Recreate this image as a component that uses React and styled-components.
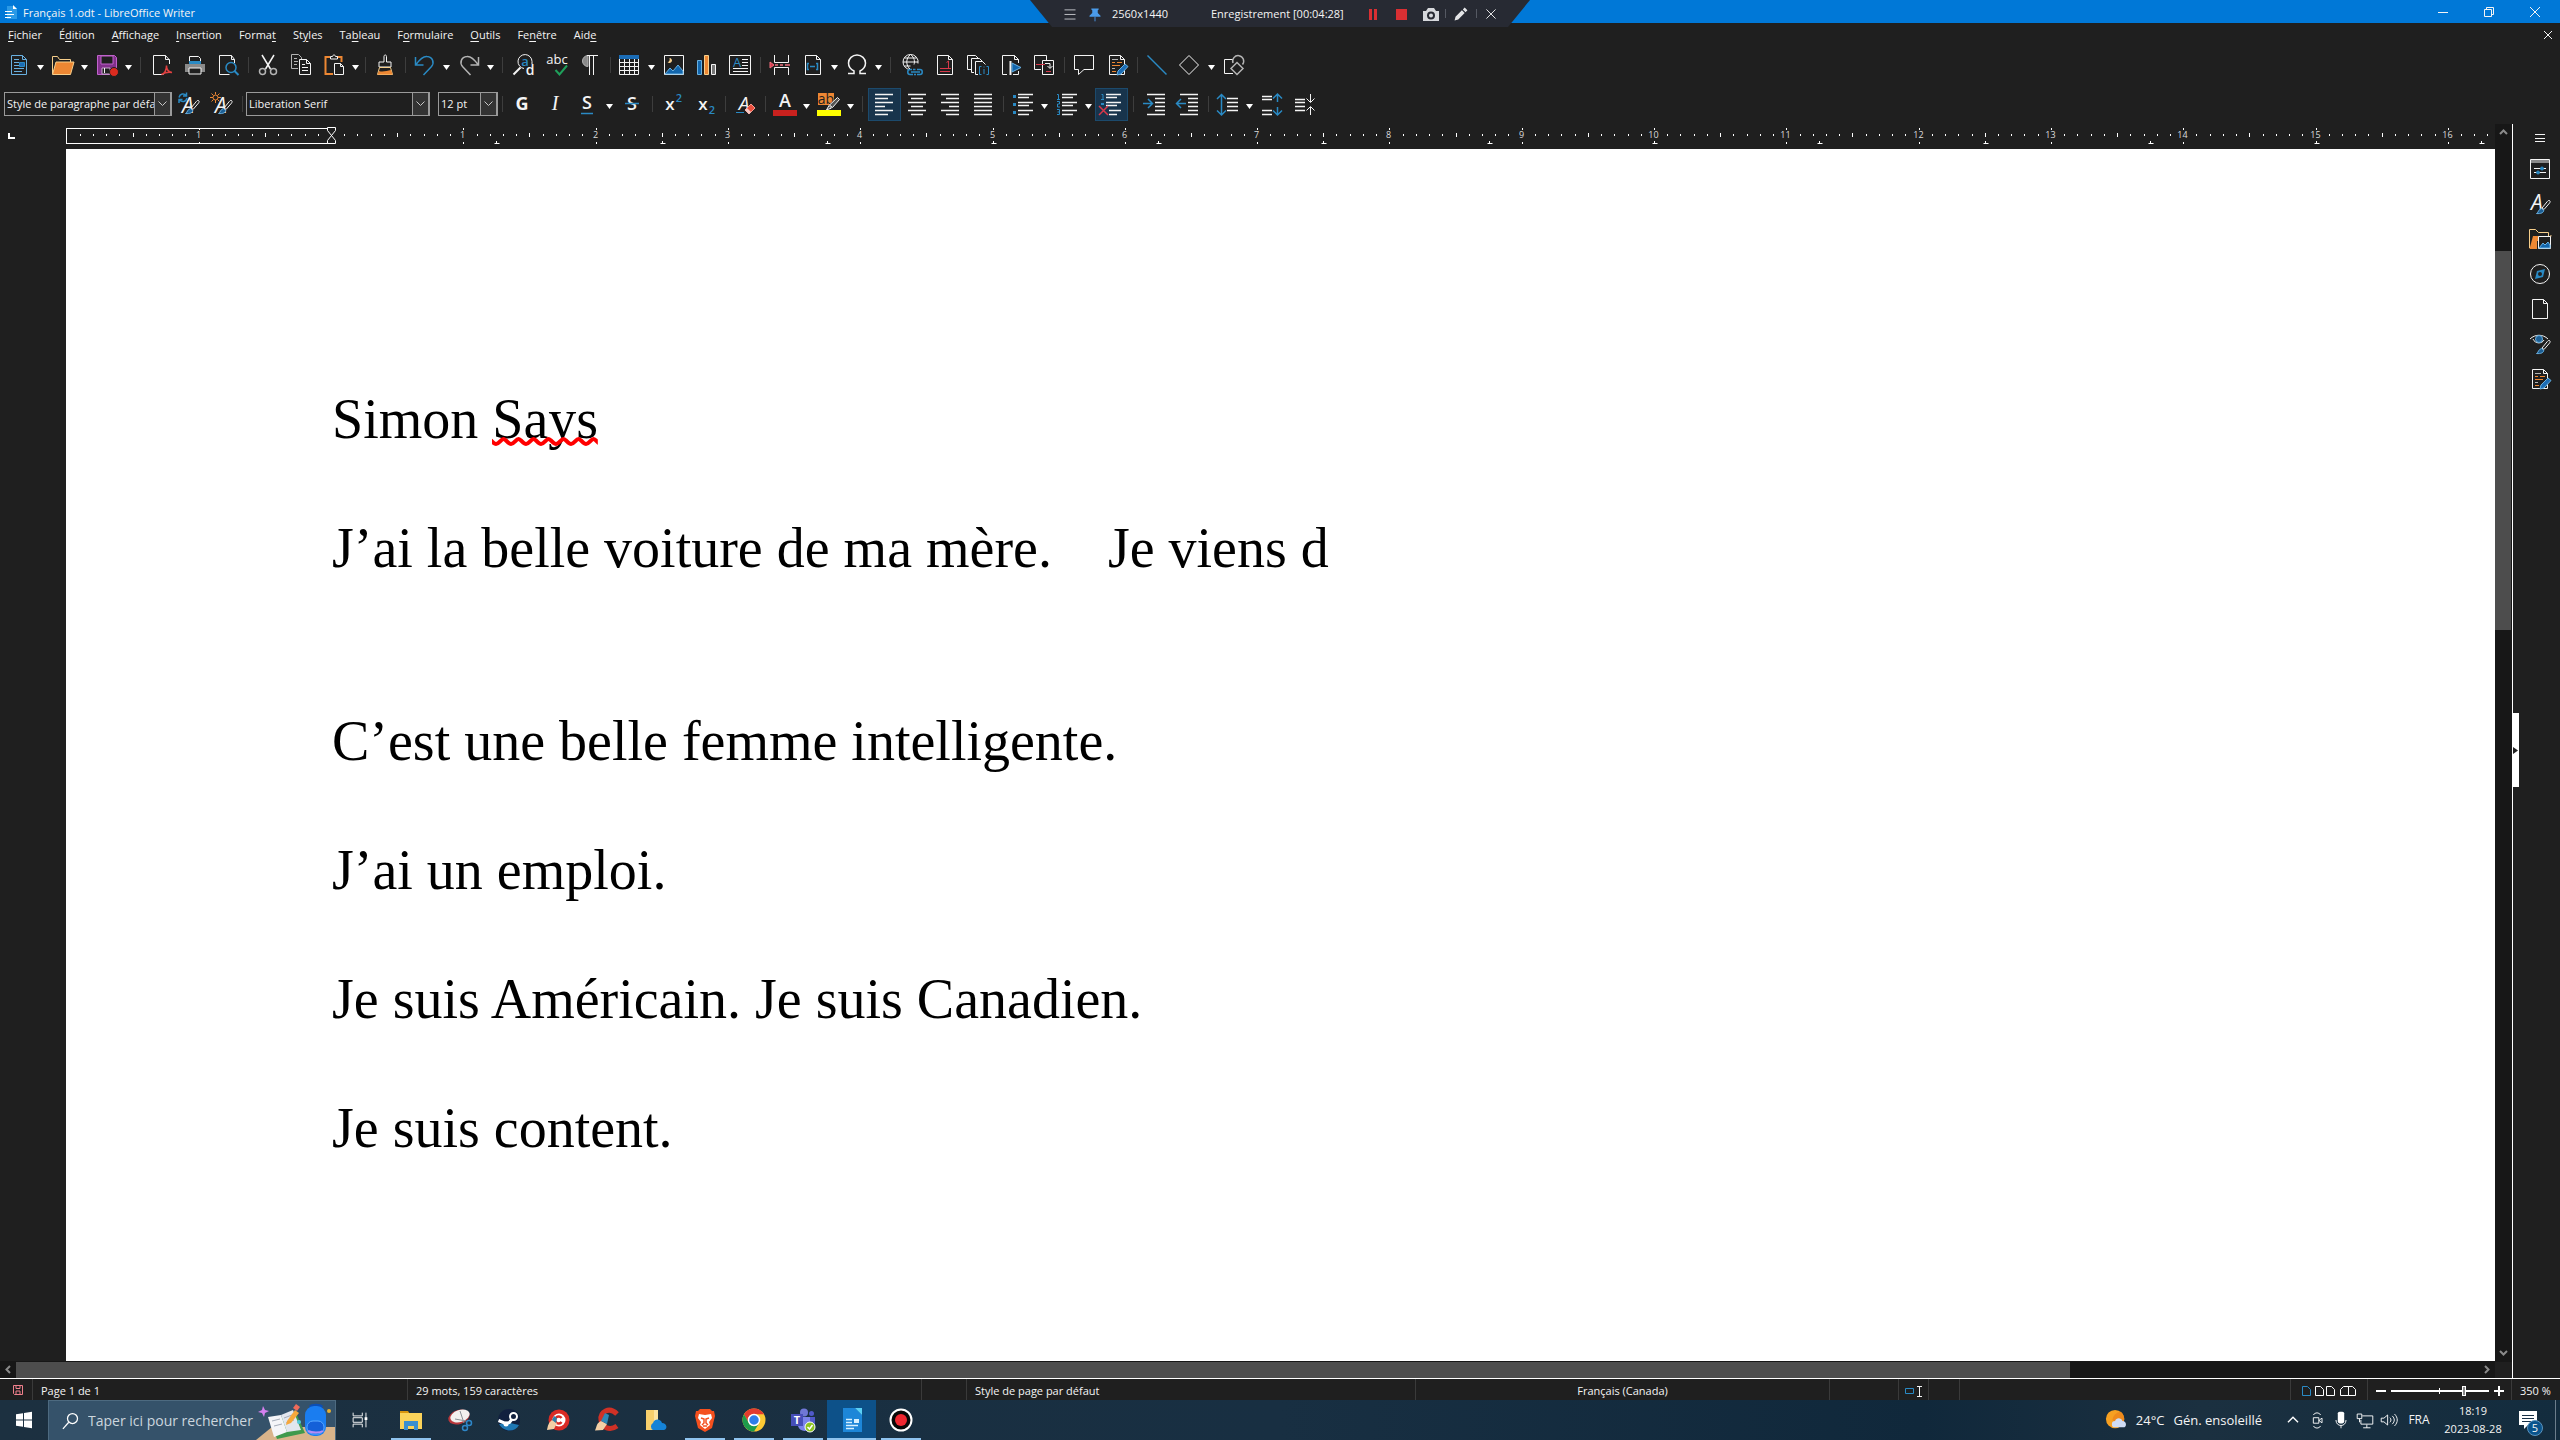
import React from 'react';
import styled, {createGlobalStyle} from 'styled-components';

const WHITE = "#f4f4f4";
const BLUE = "#2a8ac4";
const SKY = "#69b0e0";
const ORANGE = "#ed8733";
const SAND = "#f7cf8b";
const RED = "#d8384a";
const GREY = "#b4b4b4";

const UI_FONT = "'Open Sans', 'Noto Sans', sans-serif";

/* ---------- icon shapes, all on a 24 x 24 grid ---------- */

const Sheet = ({color = WHITE}) => <path d="M4.5 2.5h11l4 4v15h-15zM15.5 2.5v4h4" stroke={color}/>;
const Brush = () => <g>
    <path d="M21.5 8.500c1 .6.600 1.800 0 2.600l-5.500 6.400-2-1.500 5.500-6.700c.7-.8 1.300-1.100 2-.8z" stroke={WHITE}/>
    <path d="M13.500 16.500l2.300 1.700c0 2.500-3 3.800-7.300 3.300 2-1 1.800-4.200 5-5z" stroke={SKY} fill="#1d5f94"/>
</g>;
const Pencil = () => <path d="M12 22l1-4 7-7 3 2.500-7 7.500z" fill="#1b6cb5" stroke={SKY}/>;
const Lines = ({rows, color = WHITE, width = 2}) => <path
    d={rows.map(([x1, x2, y]) => `M${x1} ${y}H${x2}`).join("")} stroke={color} strokeWidth={width}/>;
const Glyph = ({x = 12, y = 18, size = 18, fill = WHITE, ...rest}) =>
    <text x={x} y={y} fontSize={size} fill={fill} stroke="none" textAnchor="middle" fontFamily={UI_FONT} {...rest}/>;
const EditedSheet = () => <g>
    <Sheet/>
    <path d="M7 6.500h6M7 15.500h3" stroke={GREY}/>
    <path d="M7 9.500h3M12 9.500h5M7 12.500h8M7 18.500h4" stroke={ORANGE}/>
    <Pencil/>
</g>;
const BigA = ({x = 8, y = 17, size = 19}) => <Glyph x={x} y={y} size={size} fontStyle="italic">A</Glyph>;

const SHAPES = {
    new: <g>
        <Sheet color={SKY}/>
        <path d="M7 6.500h5M7 9.500h5M7 12.500h5M7 15.500h10M7 18.500h8" stroke={SKY}/>
        <path d="M12.500 9.500h5v4h-5z" stroke={BLUE} fill="#1b6cb5"/>
    </g>,
    open: <g>
        <path d="M1.500 21V3.500h5l2 3h11V9" stroke={SAND}/>
        <path d="M5 9h18l-3.500 12.500H1.500z" fill={ORANGE} stroke={SAND}/>
    </g>,
    save: <g>
        <path d="M2.500 2.500h17l2 2v17h-19z" fill="#82308c" stroke="#c063cc"/>
        <path d="M6 3h12v8H6z" fill="#1f1f1f" stroke="#c063cc"/>
        <path d="M7 15h8v6H7z" fill="#1f1f1f" stroke="#c9a6cd"/>
        <path d="M9.500 15v5" stroke={WHITE}/>
        <circle cx="19" cy="19" r="4.500" fill="#dc2b1f" stroke="#1f1f1f"/>
    </g>,
    pdf: <g>
        <path d="M19.500 11V7l-4-4.500h-12v19h10M15.500 2.500v4h4" stroke={WHITE}/>
        <path d="M11.500 21.500c4-1.500 5-5 5-9 0 4.500 2 6.500 5.500 7-4-1-7 0-10.500 2z" stroke="#e04040" strokeWidth="1.500"/>
    </g>,
    print: <g>
        <path d="M6.500 9V3.500h9l2 2V9" stroke={WHITE}/>
        <path d="M6 8h12v4H6z" fill={BLUE}/>
        <path d="M2 11h20v8H2z" fill="#8a8a8a"/>
        <path d="M6 15h12v6H6z" fill="#1f1f1f" stroke={WHITE}/>
    </g>,
    preview: <g>
        <path d="M18.500 10V6.500l-3-4h-12v19h10M15.500 2.500v4h3" stroke={WHITE}/>
        <circle cx="15" cy="14.500" r="5" stroke={BLUE} strokeWidth="1.500"/>
        <path d="M18.500 18l4 4" stroke={BLUE} strokeWidth="2"/>
    </g>,
    cut: <g>
        <path d="M6 2l8.500 14M18 2L9.500 16" stroke={WHITE} strokeWidth="1.500"/>
        <circle cx="6.500" cy="18.500" r="3" stroke={GREY} strokeWidth="1.500"/>
        <circle cx="17.500" cy="18.500" r="3" stroke={GREY} strokeWidth="1.500"/>
    </g>,
    copy: <g>
        <path d="M9 15.500H2.500v-14h7l3 3V7M5 5.500h3M5 8.500h4M5 11.500h3" stroke={GREY}/>
        <path d="M10.500 6.500h7l4 4v11h-11zM17.500 6.500v4h4M13 11.500h3M13 14.500h6M13 17.500h6" stroke={WHITE}/>
    </g>,
    paste: <g>
        <path d="M8 4H3.500v17H11M15 4h4.500v5" stroke={ORANGE} strokeWidth="2"/>
        <path d="M8.500 6V3.500h2c0-2 3-2 3 0h2V6z" stroke={WHITE}/>
        <path d="M12.500 10.500h6l3 3v8h-9zM18.500 10.500v3h3" stroke={WHITE}/>
    </g>,
    brush: <g>
        <path d="M11 9V3.500c0-2 2.500-2 2.500 0V9h4.500v5H6V9z" stroke={WHITE}/>
        <path d="M6.500 14.500h11l2 7h-15z" stroke={SAND}/>
        <path d="M6 18c4 1.500 8-.5 12-1l1.500 4.500h-15z" fill={ORANGE}/>
    </g>,
    undo: <path d="M2.500 4v8h8M3 11.500C7 6 10 3 14 3.500c6 .5 7.500 6.500 4.500 10l-8 8.500" stroke={BLUE} strokeWidth="1.500"/>,
    redo: <path d="M21.500 4v8h-8M21 11.500C17 6 14 3 10 3.500c-6 .5-7.500 6.500-4.500 10l8 8.500" stroke={GREY} strokeWidth="1.500"/>,
    find: <g>
        <path d="M20 11V8.500a7 7 0 1 0-8 7" stroke={WHITE}/>
        <path d="M8.500 14.500L1.500 21.500" stroke={WHITE} strokeWidth="2"/>
        <Glyph x={13} y={13} size={13} fill={BLUE} fontWeight="600">a</Glyph>
        <Glyph x={18} y={22} size={14} fontWeight="600">d</Glyph>
    </g>,
    spelling: <g>
        <Glyph x={12} y={11} size={13}>abc</Glyph>
        <path d="M10.500 17l4 4.500L22 12.500" stroke="#1fa05b" strokeWidth="2"/>
    </g>,
    pilcrow: <g>
        <path d="M10 2.500a5.500 5.500 0 0 0 0 11z" fill="#8a8a8a" stroke={GREY}/>
        <path d="M9 2.500h11M11.500 2.500V22M15.500 2.500V22" stroke={WHITE}/>
    </g>,
    table: <g transform="translate(-1 0)">
        <path d="M2.500 2.500h19v19h-19zM2.500 9.500h19M2.500 13.500h19M2.500 17.500h19M7.500 6v15M12.500 6v15M17.500 6v15" stroke={WHITE}/>
        <path d="M2 2h20v4H2z" fill="#1b6cb5"/>
    </g>,
    image: <g>
        <path d="M2.500 2.500h19v19h-19z" stroke={WHITE}/>
        <path d="M3 21l5-6 3 3 5-6 5 6v3z" fill="#1266ad" stroke={SKY}/>
        <path d="M7.500 5a2.500 2.500 0 1 1-2 4c2 0 2.500-2 2-4z" fill={SAND}/>
    </g>,
    chart: <g>
        <path d="M2.500 7.500h4v14h-4z" fill="#1266ad" stroke={SKY}/>
        <path d="M9.500 2.500h4v19h-4z" fill={ORANGE} stroke={SAND}/>
        <path d="M16.500 11.500h4v10h-4z" fill="#777" stroke={WHITE}/>
    </g>,
    textbox: <g>
        <path d="M1.500 2.500h21v19h-21zM14 6.500h6M14 9.500h6M14 12.500h6M5 15.500h15M5 18.500h15" stroke={WHITE}/>
        <Glyph x={9} y={14} size={13} fill={BLUE}>A</Glyph>
    </g>,
    pageBreak: <g>
        <path d="M6.500 2v7.500h14V2M6.500 22v-7.500h14V22" stroke={WHITE}/>
        <path d="M7 12h3M12 12h3M17 12h5" stroke="#ef6f7d" strokeWidth="1.500"/>
        <path d="M2 9l4 3-4 3z" fill={RED} stroke="#ef6f7d"/>
    </g>,
    field: <g>
        <Sheet/>
        <path d="M8 10.500H6.500v6H8M15 10.500h1.500v6H15M9 13.500h5" stroke={BLUE} strokeWidth="1.500"/>
    </g>,
    omega: <path d="M3 20.500h6v-2.500C5 16 3.500 13 3.500 10a8.500 8 0 0 1 17 0c0 3-1.500 6-5.500 8v2.500h6" stroke={WHITE} strokeWidth="1.500"/>,
    link: <g>
        <path d="M10.500 1.500a7.500 7.500 0 1 0 0 15M10.500 1.500a7.500 7.500 0 0 1 7.500 9M3 9h15M4.500 5h12M4.500 13h6M10.500 1.500c-5 4-5 11 0 15M10.500 1.500c4 3 4.500 7 3.500 10" stroke={WHITE}/>
        <path d="M12 16.500h-2c-3 0-3 5 0 5h3M17 16.500h3c3 0 3 5 0 5h-3M11 19h9M13 16.500h2.500M14 21.500h2" stroke={BLUE} strokeWidth="1.500"/>
    </g>,
    footnote: <g>
        <Sheet/>
        <path d="M7 18.500h10M7 15.500h6" stroke={RED}/>
        <path d="M13.500 9.500l2-1.500v8M13 15.500h5" stroke={RED}/>
    </g>,
    endnote: <g>
        <path d="M5 16.500H1.500v-14h8l3 3M8 19.500H5.500v-14h8l3 3M12 21.500H9.500v-13h7l3 3" stroke={WHITE}/>
        <path d="M15.500 13.500h-2v8h2M20.500 13.500h2v8h-2M18 16v5M18 13.500v1" stroke={BLUE}/>
    </g>,
    bookmark: <g>
        <path d="M8 21.500H3.500v-19h12l4 4V10M15.500 2.500v4h4M19.500 18v3.500H14" stroke={WHITE}/>
        <path d="M11.500 8v14" stroke={WHITE} strokeWidth="2"/>
        <path d="M13 10l9 4.500-9 4.500z" fill="#1266ad" stroke={SKY}/>
    </g>,
    crossRef: <g>
        <path d="M9 16.500H2.500v-14h12V7M10.500 7.500h11v14h-11zM13 10.500h5V15M15.500 13l2.500 2.500L20.500 13" stroke={WHITE}/>
        <path d="M4 11.500h9M14 18.500h5" stroke={RED}/>
    </g>,
    comment: <path d="M2.500 2.500h19v14H12l-5.500 5v-5h-4z" stroke={WHITE}/>,
    track: <EditedSheet/>,
    line: <path d="M2.500 2.500l19 19" stroke={BLUE} strokeWidth="1.500"/>,
    diamond: <path d="M11 2.500l9.500 9.500-9.500 9.500L1.500 12z" stroke={WHITE}/>,
    shapes: <g>
        <path d="M11 6.500H2.500v14H11" stroke={WHITE}/>
        <path d="M11 10a5.500 5.500 0 1 1 9.500 1.500" stroke={GREY} strokeWidth="1.500"/>
        <path d="M15 9.500l6 6-6 6-6-6z" stroke={GREY} strokeWidth="1.500"/>
    </g>,

    updateStyle: <g>
        <BigA x={11} y={21} size={21}/>
        <Brush/>
        <path d="M2 5.500C3 1.500 7 1 9 3.500M9.500 .500v3.500H6M10 6c-1 4-5 4.500-7.500 2M2 11V7.500h3.500" stroke={BLUE} strokeWidth="1.500"/>
    </g>,
    newStyle: <g>
        <BigA x={11} y={21} size={21}/>
        <Brush/>
        <path d="M5.500 0v2.500M5.500 8v3M0 5.500h3M8 5.500h3M1.500 1.500l2 2M7.500 7.500l2 2M9.500 1.500l-2 2M3.500 7.500l-2 2" stroke={ORANGE}/>
        <circle cx="5.500" cy="5.500" r="2.500" stroke={ORANGE}/>
    </g>,
    bold: <Glyph fontWeight="700">G</Glyph>,
    italic: <Glyph size={20} fontFamily="'Liberation Serif', serif" fontStyle="italic">I</Glyph>,
    underline: <g>
        <Glyph x={11} y={17} fontWeight="600">S</Glyph>
        <path d="M5 21.500h12" stroke={BLUE} strokeWidth="1.500"/>
    </g>,
    strike: <g>
        <Glyph fontWeight="600">S</Glyph>
        <path d="M5 11.500h14" stroke={BLUE} strokeWidth="1.500"/>
    </g>,
    superscript: <g>
        <Glyph x={10} size={17} fontWeight="600">x</Glyph>
        <Glyph x={19} y={10} size={11} fill={BLUE} fontWeight="600">2</Glyph>
    </g>,
    subscript: <g>
        <Glyph x={10} size={17} fontWeight="600">x</Glyph>
        <Glyph x={19} y={22} size={11} fill={BLUE} fontWeight="600">2</Glyph>
    </g>,
    clear: <g>
        <BigA x={11} y={18}/>
        <path d="M3 20.500h8" stroke={BLUE}/>
        <path d="M12 18l6-6 4 4-6 6z" fill="#e8503f" stroke="#f59b90"/>
        <path d="M12 18l2-2 4 4-2 2z" fill="#f7c9c4"/>
    </g>,
    fontColor: <g>
        <Glyph y={15} size={18} fontWeight="600">A</Glyph>
        <path d="M0 18h24v6H0z" fill="#c9211e"/>
    </g>,
    highlight: <g>
        <path d="M1 1h16v12H1z" fill={ORANGE}/>
        <Glyph x={9} y={12} size={14} fill="#1f1f1f">ab</Glyph>
        <path d="M20.500 5.500l2 2-7 8-3-2.500zM12 13.500l2.500 2.500-5 2z" stroke={WHITE} fill="#555"/>
        <path d="M0 18h24v6H0z" fill="#ffff00"/>
    </g>,
    left: <Lines width={1.500} rows={[[3, 21, 2.500], [3, 16, 6.500], [3, 21, 10.500], [3, 13, 14.500], [3, 21, 18.500], [3, 16, 22.500]]}/>,
    center: <Lines width={1.500} rows={[[3, 21, 2.500], [6, 18, 6.500], [3, 21, 10.500], [6, 18, 14.500], [3, 21, 18.500], [6, 18, 22.500]]}/>,
    right: <Lines width={1.500} rows={[[3, 21, 2.500], [8, 21, 6.500], [3, 21, 10.500], [11, 21, 14.500], [3, 21, 18.500], [8, 21, 22.500]]}/>,
    justify: <Lines width={1.500} rows={[[3, 21, 2.500], [3, 21, 6.500], [3, 21, 10.500], [3, 21, 14.500], [3, 21, 18.500], [3, 21, 22.500]]}/>,
    bullets: <g>
        <Lines width={1.500} rows={[[7, 22, 2.500], [7, 18, 5.500], [7, 22, 10.500], [7, 18, 13.500], [7, 22, 18.500], [7, 18, 22.500]]}/>
        <path d="M2 3h3v3H2zM2 11h3v3H2zM2 19h3v3H2z" fill={BLUE}/>
    </g>,
    numbering: <g>
        <Lines width={1.500} rows={[[7, 22, 2.500], [7, 18, 5.500], [7, 22, 10.500], [7, 18, 13.500], [7, 22, 18.500], [7, 18, 22.500]]}/>
        <path d="M2 2.500h1.500v5M2 7.500h3M2 9.500h2.500v2.500H2.500v3H5M2 17.500h2.500v5H2M2.500 20h2" stroke={BLUE}/>
    </g>,
    noList: <g>
        <Lines width={1.500} rows={[[7, 22, 2.500], [7, 18, 5.500], [7, 22, 10.500], [7, 18, 13.500], [10, 22, 18.500], [10, 18, 22.500]]}/>
        <path d="M2.500 2.500h1.500v5M2 7.500h3" stroke={BLUE}/>
        <path d="M2 11h3v2H2z" fill={BLUE}/>
        <path d="M0 14l9 9M9 14l-9 9" stroke={RED} strokeWidth="1.500"/>
    </g>,
    indent: <g>
        <Lines width={1.500} rows={[[4, 22, 2.500], [12, 22, 6.500], [12, 22, 10.500], [12, 22, 14.500], [12, 22, 18.500], [4, 22, 22.500]]}/>
        <path d="M0 11.500h9M5 7l4.500 4.500L5 16" stroke={BLUE} strokeWidth="1.500"/>
    </g>,
    outdent: <g>
        <Lines width={1.500} rows={[[4, 22, 2.500], [12, 22, 6.500], [12, 22, 10.500], [12, 22, 14.500], [12, 22, 18.500], [4, 22, 22.500]]}/>
        <path d="M1 11.500h9M5 7L.500 11.500 5 16" stroke={BLUE} strokeWidth="1.500"/>
    </g>,
    spacing: <g>
        <Lines width={1.500} rows={[[11, 22, 6.500], [11, 22, 10.500], [11, 22, 14.500], [11, 22, 18.500]]}/>
        <path d="M5.500 3v20M1 7l4.500-4.500L10 7M1 18.500l4.500 4.500 4.500-4.500" stroke={BLUE} strokeWidth="1.500"/>
    </g>,
    moreSpace: <g>
        <Lines width={1.500} rows={[[2, 12, 4.500], [2, 12, 7.500], [2, 12, 18.500], [2, 12, 22.500]]}/>
        <path d="M17.500 2v8M13 6.500l4.500-4.500L22 6.500M17.500 15v8M13 18.500l4.500 4.500 4.500-4.500" stroke={BLUE} strokeWidth="1.500"/>
    </g>,
    lessSpace: <g>
        <Lines width={1.500} rows={[[2, 12, 7.500], [2, 12, 10.500], [2, 12, 14.500], [2, 12, 18.500]]}/>
        <path d="M17.500 2v8M13.500 6.500l4 4 4-4M17.500 15v8M13.500 18.500l4-4 4 4" stroke={WHITE}/>
    </g>,

    burger: <Lines width={1} rows={[[7, 17, 8.500], [7, 17, 12.500], [7, 17, 15.500]]}/>,
    properties: <g>
        <path d="M2.500 2.500h19v19h-19z" stroke={WHITE}/>
        <path d="M3 3h18v3H3z" fill="#8a8a8a"/>
        <path d="M6 11.500h12M6 15.500h12" stroke={WHITE}/>
        <circle cx="14" cy="11.500" r="1.500" fill={BLUE} stroke={BLUE}/>
        <circle cx="10" cy="15.500" r="1.500" fill={BLUE} stroke={BLUE}/>
    </g>,
    styles: <g><BigA x={9} y={18} size={21}/><Brush/></g>,
    gallery: <g>
        <path d="M1.500 21V2.500h6l3 3h10V9M23 8l-1 5" stroke={SAND}/>
        <path d="M5 9h18v5H9v8H1.500z" fill={ORANGE}/>
        <path d="M10.500 9.500h12v12h-12z" fill="#1f1f1f" stroke={WHITE}/>
        <path d="M11 21l4-5 2 2 3-3 2 3v3z" fill="#1266ad" stroke={SKY}/>
    </g>,
    navigator: <g>
        <circle cx="12" cy="12" r="9.500" stroke={WHITE}/>
        <path d="M17 7l-2 8-8 2 2-8z" fill={BLUE}/>
        <circle cx="12" cy="12" r="2" fill="#1f1f1f"/>
    </g>,
    page: <Sheet/>,
    inspector: <g>
        <path d="M2 7C7 2 15 2 20 7M5 7c2 5 9 5 11 1" stroke={WHITE}/>
        <circle cx="11" cy="7" r="3.500" fill="#1d5f94" stroke={SKY}/>
        <Brush/>
    </g>,
    changes: <EditedSheet/>,

    minimize: <path d="M7 12.500h10" stroke={WHITE}/>,
    restore: <path d="M7.500 9.500h7v7h-7zM9.500 9V7.500h7v7H15" stroke={WHITE}/>,
    close: <path d="M7 7l10 10M17 7L7 17" stroke={WHITE}/>,
    closeSmall: <path d="M8 8l8 8M16 8l-8 8" stroke={WHITE}/>,
    recMenu: <path d="M6 7.500h12M6 12.500h12M6 17.500h12" stroke="#c8cbd0"/>,
    pin: <g>
        <path d="M8 6h8v1l-1 1v3l3 3v1H6v-1l3-3V8L8 7z" fill="#4a9bea"/>
        <path d="M12 15v5" stroke="#4a9bea"/>
    </g>,
    pause: <path d="M8 7h3v11H8zM13 7h3v11h-3z" fill="#d92f33"/>,
    stop: <path d="M6 7h11v11H6z" fill="#d92f33"/>,
    camera: <g>
        <path d="M4 9h3l2-3h6l2 3h3v10H4z" fill="#d6d8dc"/>
        <circle cx="12" cy="13.500" r="3" fill="#d6d8dc" stroke="#272a33" strokeWidth="2"/>
    </g>,
    draw: <path d="M5 19l1-4 7-7 3 3-7 7zM14 7l2-2 3 3-2 2z" fill="#e3e4e6"/>,

    modified: <path d="M7.500 6.500h9v9h-8l-1-1zM10 6.500v3h4v-3M10 15v-3h4v3" stroke="#f0808c"/>,
    insertMode: <g>
        <path d="M3.500 9.500h8v5h-8z" stroke={BLUE}/>
        <path d="M15 7.500h5M15 17.500h5M17.500 8v9" stroke={WHITE}/>
    </g>,

    windows: <path d="M4 6.200l7-1v6.300H4zM12 5l8-1.200v7.700h-8zM4 12.500h7v6.300l-7-1zM12 12.500h8v7.700L12 19z" fill="#fff"/>,
    search: <g>
        <circle cx="15" cy="9" r="6" stroke="#fff" strokeWidth="1.500"/>
        <path d="M10.500 13.500l-7 8" stroke="#fff" strokeWidth="1.500"/>
    </g>,
    taskView: <g>
        <path d="M4.500 4v3.500h10V4M4.500 20v-3.500h10V20M4.500 9.500h10v5h-10zM18.500 4v16" stroke="#fff"/>
        <path d="M17 9h3v3h-3z" fill="#fff"/>
    </g>,
    explorer: <g>
        <path d="M1 3h8l2 3H1z" fill="#d9960e"/>
        <path d="M1 5h22v16H1z" fill="#fbd35a"/>
        <path d="M5 13h14v9h-4v-4H9v4H5z" fill="#3a8fd0"/>
    </g>,
    snip: <g>
        <ellipse cx="11" cy="9" rx="11" ry="7" fill="#b8373b" transform="rotate(-18 11 9)"/>
        <ellipse cx="12" cy="8" rx="10" ry="6" fill="#f2f0ee" transform="rotate(-18 12 8)"/>
        <path d="M12 3l4 12M7 11l11 2" stroke="#8b9196"/>
        <circle cx="17" cy="20" r="2.500" stroke="#2e86c8" strokeWidth="1.500"/>
        <circle cx="21" cy="15" r="2.500" stroke="#2e86c8" strokeWidth="1.500"/>
    </g>,
    steam: <g>
        <circle cx="12" cy="12" r="11" fill="#11203f"/>
        <path d="M2 16c4 8 16 9 20 1l-9-2z" fill="#1f78b4"/>
        <path d="M1.500 12.500l7 3 4-1 3-4" stroke="#fff" strokeWidth="3"/>
        <circle cx="16.500" cy="8.500" r="3.500" fill="#11203f" stroke="#fff" strokeWidth="2"/>
        <circle cx="9" cy="16" r="2.500" fill="#fff"/>
    </g>,
    cleanerDisc: <g>
        <circle cx="13" cy="12" r="10.500" fill="#d92b25"/>
        <circle cx="13" cy="12" r="6.500" fill="#fff"/>
        <path d="M15.500 10a3.500 3.500 0 1 0 0 4" stroke="#d92b25" strokeWidth="2.500"/>
        <path d="M6 12l5 3-3 6-7 1c1-4 1-7 5-10z" fill="#f3cfa5"/>
        <path d="M8 8l3 2-1 5-4-3z" fill="#2f7fa8"/>
    </g>,
    cleaner: <g>
        <path d="M22 6C14-2 5 4 6 12s9 11 16 6" stroke="#cf3126" strokeWidth="5"/>
        <path d="M6 13l6 3-4 6-8 .5c2-4 1-7 6-9.500z" fill="#f3cfa5"/>
        <path d="M10 5l4 2-2 9-6-3z" fill="#2f86b5"/>
    </g>,
    cloudFolder: <g>
        <path d="M2 2h9v20H2z" fill="#f6cf6c"/>
        <path d="M10 2h4v20h-4z" fill="#fbe3a0"/>
        <path d="M9 22a4 4 0 0 1 0-7c2-5 8-4 9 0 5 0 6 6 2 7z" fill="#1583d8"/>
    </g>,
    brave: <g>
        <path d="M7 1h10l2 2h2l1 5-3 12-7 4-7-4L2 8l1-5h2z" fill="#f4501e"/>
        <path d="M6 6l6 1 6-1 1 4-3 4 1 3-5 4-5-4 1-3-3-4z" fill="#fff"/>
        <path d="M8 10l3 1v4l-2 2M16 10l-3 1v4l2 2M10 18h4" stroke="#f4501e" strokeWidth="1.500"/>
    </g>,
    chrome: <g>
        <circle cx="12" cy="12" r="11.500" fill="#fcc934"/>
        <path d="M2 6.300A11.500 11.500 0 0 1 22 6.300H12a6 6 0 0 0-5.200 9z" fill="#e33b2e"/>
        <path d="M2 6.300A11.500 11.500 0 0 0 12 23.500l5.200-8.500a6 6 0 0 1-10.400 0z" fill="#1e9b4b"/>
        <circle cx="12" cy="12" r="5.500" fill="#2f7de9" stroke="#fff" strokeWidth="1.500"/>
    </g>,
    teams: <g>
        <circle cx="13" cy="4.500" r="4" fill="#6f77d6"/>
        <circle cx="20.500" cy="5.500" r="2.500" fill="#5059c9"/>
        <path d="M16 9h8v7c0 3-3 5-6 4z" fill="#5059c9"/>
        <path d="M7 9h12v9c0 6-10 7-12 0z" fill="#7b83eb"/>
        <path d="M0 6h12v12H0z" fill="#464eb8"/>
        <Glyph x={6} y={16} size={11} fill="#fff" fontWeight="700">T</Glyph>
        <circle cx="19" cy="19" r="5" fill="#8cc31f" stroke="#fff"/>
        <path d="M16.500 19l2 2 3-4" stroke="#fff" strokeWidth="1.500"/>
    </g>,
    writer: <g>
        <path d="M3 0h12l7 7v17H3z" fill="#1d86d8"/>
        <path d="M15 0h7v7z" fill="#5bd0f5"/>
        <path d="M6 11.500h6M6 14.500h6M6 17.500h12M6 20.500h8" stroke="#d7f0ff" strokeWidth="1.500"/>
        <path d="M14 11h5v4h-5z" fill="#d7f0ff"/>
    </g>,
    record: <g>
        <circle cx="12" cy="12" r="10.500" fill="#080808" stroke="#fff" strokeWidth="2"/>
        <circle cx="12" cy="12" r="6" fill="#ee2630"/>
    </g>,
    sun: <g>
        <circle cx="11" cy="11" r="10" fill="#f6a021"/>
        <path d="M8 12A10 10 0 0 1 17 3a10 10 0 0 1 0 16z" fill="#ee8a1c"/>
        <path d="M11 20a3.500 3.500 0 0 1 0-7c1-4 7-4 8 0 5 0 5 7 1 7z" fill="#cfdcf5"/>
    </g>,
    chevronUp: <path d="M6.500 14.500L12 9l5.500 5.500" stroke="#fff" strokeWidth="1.500"/>,
    meet: <g>
        <path d="M8 9.500h6v6H8zM14.500 12l3-2v5l-3-2z" stroke="#fff" fill="none"/>
        <path d="M8 6.500c2-3 6-3 8 0M8 18.500c2 3 6 3 8 0" stroke="#fff"/>
    </g>,
    mic: <g>
        <path d="M8.500 4.500c0-2 7-2 7 0v9c0 3-7 3-7 0z" fill="#fff"/>
        <path d="M6.500 12c0 8 11 8 11 0M12 18v3" stroke="#fff"/>
    </g>,
    network: <g>
        <path d="M9 7.500h11.500v9h-13V12M14 17v3.500M10 20.500h8" stroke="#fff"/>
        <path d="M3.500 5.500h5v5h-5zM6 10.500v4" stroke="#fff"/>
    </g>,
    speaker: <path d="M3.500 10v4h3l4 3.500v-11L6.500 10zM13 9.500c1.500 1.500 1.500 3.500 0 5M15.500 7.500c3 3 3 6 0 9M18 5.500c4 4 4 9 0 13" stroke="#fff"/>,
    notes: <g>
        <path d="M3 3h18v14H12l-4 4v-4H3z" fill="#fff"/>
        <path d="M6 7.500h12M6 10.500h12M6 13.500h9" stroke="#173046"/>
    </g>,
};

const Icon = ({name, size = 24}) => <svg width={size} height={size} viewBox="0 0 24 24" fill="none" aria-hidden="true">
    {SHAPES[name]}
</svg>;

/* ---------- data ---------- */

// [before, access key, after]
const menus = [
    ["", "F", "ichier"], ["É", "d", "ition"], ["", "A", "ffichage"], ["", "I", "nsertion"], ["Forma", "t", ""],
    ["St", "y", "les"], ["Ta", "b", "leau"], ["F", "o", "rmulaire"], ["", "O", "utils"], ["Fe", "n", "être"], ["Aid", "e", ""],
];

// "+" adds a drop-down arrow, "*" is a pressed button, "|" and "||" are separators
const standardBar = "new+ open+ save+ || pdf print preview | cut copy paste+ | brush | undo+ redo+ || find spelling pilcrow | table+ image chart textbox | pageBreak field+ omega+ || link footnote endnote bookmark crossRef | comment track | line diamond+ shapes".split(" ");
const characterBar = "bold italic underline+ strike | superscript subscript | clear | fontColor+ highlight+ || left* center right justify | bullets+ numbering+ noList* || indent outdent | spacing+ moreSpace lessSpace".split(" ");

const panels = ["properties", "styles", "gallery", "navigator", "page", "inspector", "changes"];

const apps = [
    {name: "explorer", open: true}, {name: "snip"}, {name: "steam"}, {name: "cleanerDisc"}, {name: "cleaner"},
    {name: "cloudFolder"}, {name: "brave", open: true}, {name: "chrome", open: true}, {name: "teams", open: true},
    {name: "writer", open: true, active: true}, {name: "record", open: true},
];

const paragraphs = [
    {text: "J’ai la belle voiture de ma mère.    Je viens d", after: 129},
    {text: "C’est une belle femme intelligente."},
    {text: "J’ai un emploi."},
    {text: "Je suis Américain. Je suis Canadien."},
    {text: "Je suis content."},
];

/* ---------- parts ---------- */

const Tools = ({items}) => items.map((item, i) => {
    if (item[0] === "|") {
        return <Separator key={i} $wide={item === "||"}/>;
    }
    const name = item.replace(/[+*]/, "");
    return <React.Fragment key={i}>
        <ToolButton $pressed={item.endsWith("*")} aria-label={name}><Icon name={name}/></ToolButton>
        {item.endsWith("+") ? <Caret aria-label={name + " options"}>
            <svg width="7" height="5"><path d="M0 0h7l-3.500 5z" fill="#fff"/></svg>
        </Caret> : null}
    </React.Fragment>;
});

const Combo = ({label, value, width}) => <ComboBox $width={width}>
    <ComboSelect aria-label={label} defaultValue={value}>
        <option>{value}</option>
    </ComboSelect>
    <ComboArrow>
        <svg width="9" height="6" fill="none"><path d="M.500 .500l4 4 4-4" stroke="#c8c8c8"/></svg>
    </ComboArrow>
</ComboBox>;

const INCH = 132.3;
const ORIGIN = 265;

const Ruler = () => {
    const ticks = [];
    for (let i = -19; i <= 163; i++) {
        const x = Math.round(ORIGIN + i * INCH / 10);
        if (i === 0) continue;
        if (i % 10 === 0) {
            ticks.push(<g key={i}>
                <path d={`M${x} 4v2M${x} 18v2`}/>
                <text x={x - 1} y="14">{Math.abs(i / 10)}</text>
            </g>);
        } else {
            ticks.push(<path key={i} d={i % 5 === 0 ? `M${x} 9v4` : `M${x} 10v2`}/>);
        }
    }
    const stops = [];
    for (let i = 1; i <= 13; i++) {
        const x = Math.round(ORIGIN + i * INCH * 1.25);
        stops.push(<path key={i} d={`M${x} 17v2M${x - 2} 19.500h5`}/>);
    }
    return <RulerScale>
        <g transform="translate(.5 0)" stroke="#fff" fill="none">
            {ticks}
            {stops}
            <path d="M0 4.500h265M0 19.500h265M0 4v16"/>
            <path d="M261 3.500h8v3l-8 10v3h8v-3l-8-10z" fill="#1f1f1f"/>
        </g>
    </RulerScale>;
};

const Arrow = ({d}) => <svg width="16" height="16" fill="none" aria-hidden="true"><path d={d} stroke="#8a8a8a" strokeWidth="2"/></svg>;

const BooksAndBag = () => <svg width="79" height="38" viewBox="0 0 79 38" aria-hidden="true">
    <path d="M0 38l16-13h63v13z" fill="#d9b48a"/>
    <path d="M14 18l26-7 9 20-28 6z" fill="#3f9a4c"/>
    <path d="M12 15l13-2 6 17-13 5z" fill="#f4f5f8"/>
    <path d="M25 13l12-5 8 20-14 2z" fill="#e2e6ee"/>
    <path d="M16 19l8-2M18 24l8-2M28 16l8-3M30 21l8-3" stroke="#a5acb8"/>
    <path d="M31 19l8-11 4 3-8 10-5 2z" fill="#f6a83c"/>
    <path d="M37 6l3-4 4 3-3 4z" fill="#ee6a5a"/>
    <path d="M7 4l2 4 4 1-4 2-1 4-2-4-4-1 4-2z" fill="#d580f0"/>
    <circle cx="43" cy="20" r="2" fill="#4fc7d8"/>
    <circle cx="73" cy="9" r="2" fill="#e8b030"/>
    <path d="M53 4c2-3 12-3 14 0l-2 4H55z" fill="#0c4fb5"/>
    <rect x="49" y="4" width="21" height="30" rx="9" fill="#1a7df0"/>
    <rect x="51" y="19" width="17" height="13" rx="6" fill="#1460d8" stroke="#59a8ff"/>
    <path d="M52 29c4 2 12 2 15 0" stroke="#b58cf5" strokeWidth="2" fill="none"/>
</svg>;

const App = () => <Desktop>
    <GlobalStyle/>
    <TitleBar>
        <WindowTitle>
            <svg width="14" height="16" viewBox="0 0 14 16" aria-hidden="true">
                <path d="M3 1h7l3 3v10H3z" fill="#2b9ae6"/>
                <path d="M9 0l4 4H9z" fill="#fff"/>
                <path d="M1 6.500h7M1 9.500h9M1 12.500h6" stroke="#fff"/>
            </svg>
            <span>Français 1.odt - LibreOffice Writer</span>
        </WindowTitle>
        <Recorder>
            <RecButton aria-label="Menu"><Icon name="recMenu" size={22}/></RecButton>
            <RecButton aria-label="Épingler"><Icon name="pin" size={22}/></RecButton>
            <RecText>2560x1440</RecText>
            <RecText>Enregistrement [00:04:28]</RecText>
            <RecButton aria-label="Pause"><Icon name="pause"/></RecButton>
            <RecButton aria-label="Arrêter"><Icon name="stop"/></RecButton>
            <RecButton aria-label="Capture"><Icon name="camera"/></RecButton>
            <RecLine/>
            <RecButton aria-label="Dessiner"><Icon name="draw" size={22}/></RecButton>
            <RecLine/>
            <RecButton aria-label="Fermer"><Icon name="close" size={22}/></RecButton>
        </Recorder>
        <WindowButtons>
            <WindowButton aria-label="Réduire"><Icon name="minimize"/></WindowButton>
            <WindowButton aria-label="Restaurer"><Icon name="restore"/></WindowButton>
            <WindowButton aria-label="Fermer"><Icon name="close"/></WindowButton>
        </WindowButtons>
    </TitleBar>

    <MenuBar>
        {menus.map(([a, key, b]) => <MenuItem key={a + key + b}>{a}<u>{key}</u>{b}</MenuItem>)}
        <CloseDocument aria-label="Fermer le document"><Icon name="closeSmall"/></CloseDocument>
    </MenuBar>

    <Toolbar><Tools items={standardBar}/></Toolbar>
    <Toolbar $format>
        <Combo label="Style de paragraphe" value="Style de paragraphe par défaut" width={168}/>
        <Tools items={["updateStyle", "newStyle", "|"]}/>
        <Combo label="Police" value="Liberation Serif" width={184}/>
        <Gap/>
        <Combo label="Taille" value="12 pt" width={60}/>
        <Tools items={["|", ...characterBar]}/>
    </Toolbar>

    <Body>
        <Editor>
            <EditorRow>
                <Column>
                    <RulerRow>
                        <RulerCorner>
                            <svg width="8" height="8" fill="none"><path d="M1 1v5h6" stroke="#fff" strokeWidth="2"/></svg>
                        </RulerCorner>
                        <Ruler/>
                    </RulerRow>
                    <Canvas>
                        <Page>
                            <Paragraph>Simon <Misspelled>Says
                                <Squiggle aria-hidden="true">
                                    <pattern id="wave" width="15" height="9" patternUnits="userSpaceOnUse">
                                        <path d="M-4 2C-1 2 1 7 4 7S9 2 11.500 2 16 7 19 7" stroke="#f00" strokeWidth="4" fill="none"/>
                                    </pattern>
                                    <rect width="100%" height="9" fill="url(#wave)"/>
                                </Squiggle>
                            </Misspelled></Paragraph>
                            {paragraphs.map((p) => <Paragraph key={p.text} $after={p.after}>{p.text}</Paragraph>)}
                        </Page>
                    </Canvas>
                </Column>
                <VerticalScroll>
                    <Arrow d="M5 10l3.500-3.500L12 10"/>
                    <Track $grow={111}/>
                    <Thumb $grow={379}/>
                    <Track $grow={714}/>
                    <Arrow d="M5 6l3.500 3.500L12 6"/>
                </VerticalScroll>
            </EditorRow>
            <HorizontalScroll>
                <Arrow d="M10 4L6.500 7.500 10 11"/>
                <Thumb $grow={2054}/>
                <Track $grow={409}/>
                <Arrow d="M6 4l3.500 3.500L6 11"/>
                <ScrollCorner/>
            </HorizontalScroll>
        </Editor>
        <Sidebar>
            <Handle aria-label="Masquer le volet">
                <svg width="6" height="7"><path d="M0 0l5 3.500L0 7z" fill="#1f1f1f"/></svg>
            </Handle>
            <PanelButton $short aria-label="Paramètres du volet"><Icon name="burger"/></PanelButton>
            {panels.map((name) => <PanelButton key={name} aria-label={name}><Icon name={name}/></PanelButton>)}
        </Sidebar>
    </Body>

    <StatusBar>
        <StatusCell $center><Icon name="modified"/></StatusCell>
        <StatusCell>Page 1 de 1</StatusCell>
        <StatusCell>29 mots, 159 caractères</StatusCell>
        <StatusCell/>
        <StatusCell>Style de page par défaut</StatusCell>
        <StatusCell $center>Français (Canada)</StatusCell>
        <StatusCell/>
        <StatusCell $center><Icon name="insertMode"/></StatusCell>
        <StatusCell/>
        <StatusCell/>
        <StatusCell $center>
            <svg width="55" height="12" fill="none" aria-hidden="true">
                <path d="M.500 1.500h5l3 3v6h-8z" stroke={BLUE}/>
                <path d="M13.500 1.500h5l3 3v6h-8zM24.500 1.500h5l3 3v6h-8zM38.500 10.500v-6l3-3h5v9zM46.500 1.500h4l3 3v6h-7z" stroke="#fff"/>
            </svg>
        </StatusCell>
        <StatusCell $center>
            <ZoomButton aria-label="Zoom arrière"><svg width="10" height="10"><path d="M0 5h10" stroke="#fff" strokeWidth="2"/></svg></ZoomButton>
            <ZoomSlider type="range" min="0" max="100" defaultValue="76" aria-label="Zoom"/>
            <ZoomButton aria-label="Zoom avant"><svg width="10" height="10"><path d="M0 5h10M5 0v10" stroke="#fff" strokeWidth="2"/></svg></ZoomButton>
        </StatusCell>
        <StatusCell>350 %</StatusCell>
    </StatusBar>

    <Taskbar>
        <TaskButton aria-label="Démarrer"><Icon name="windows"/></TaskButton>
        <SearchBox>
            <Icon name="search" size={20}/>
            <SearchInput placeholder="Taper ici pour rechercher" aria-label="Rechercher"/>
            <BooksAndBag/>
        </SearchBox>
        <TaskButton aria-label="Affichage des tâches"><Icon name="taskView" size={22}/></TaskButton>
        <Apps>
            {apps.map((app) => <AppButton key={app.name} $open={app.open} $active={app.active} aria-label={app.name}>
                <Icon name={app.name}/>
            </AppButton>)}
        </Apps>
        <Weather>
            <Icon name="sun" size={22}/>
            <span>24°C</span>
            <span>Gén. ensoleillé</span>
        </Weather>
        <Tray>
            {["chevronUp", "meet", "mic", "network", "speaker"].map((name) =>
                <TrayButton key={name} aria-label={name}><Icon name={name} size={22}/></TrayButton>)}
        </Tray>
        <Language>FRA</Language>
        <Clock>
            <span>18:19</span>
            <span>2023-08-28</span>
        </Clock>
        <Notifications aria-label="Notifications">
            <Icon name="notes"/>
            <Badge>5</Badge>
        </Notifications>
        <ShowDesktop aria-label="Afficher le bureau"/>
    </Taskbar>
</Desktop>;

export default App;

/* ---------- styles ---------- */

const GlobalStyle = createGlobalStyle`
    *, *::before, *::after { box-sizing: border-box; }
    body {
        margin: 0;
        background: #1f1f1f;
        color: #f4f4f4;
        font: 11px/16px ${UI_FONT};
    }
    button, input, select { font: inherit; color: inherit; }
    button { border: 0; padding: 0; background: none; }
    svg { display: block; flex: none; overflow: visible; }
    `
const Desktop = styled.div`
    min-height: 100vh;
    display: flex;
    flex-direction: column;
    `
const TitleBar = styled.header`
    height: 23px;
    display: grid;
    grid-template-columns: 1fr 500px 1fr;
    background: #0078d7;
    `
const WindowTitle = styled.div`
    display: flex;
    align-items: center;
    gap: 5px;
    padding: 0 0 2px 4px;
    white-space: nowrap;
    `
const Recorder = styled.div`
    display: grid;
    grid-template-columns: 25px 25px 104px 147px 29px 30px 28px 1px 30px 1px 27px;
    align-items: center;
    padding-left: 27px;
    background: #272a33;
    clip-path: polygon(0 0, 100% 0, 478px 100%, 22px 100%);
    `
const RecButton = styled.button`
    display: flex;
    justify-content: center;
    `
const RecText = styled.span`
    white-space: nowrap;

    &:nth-child(3) { padding-left: 5px; }
    `
const RecLine = styled.span`
    height: 9px;
    background: #555963;
    `
const WindowButtons = styled.div`
    display: flex;
    justify-content: flex-end;
    padding: 0 2px 3px 0;
    `
const WindowButton = styled.button`
    width: 46px;
    display: flex;
    align-items: center;
    justify-content: center;
    `
const MenuBar = styled.nav`
    height: 25px;
    display: flex;
    align-items: center;
    padding-bottom: 2px;
    `
const MenuItem = styled.button`
    padding: 0 9px 0 8px;
    line-height: 20px;

    u { text-underline-offset: 2px; }
    `
const CloseDocument = styled.button`
    margin-left: auto;
    `
const Toolbar = styled.div`
    height: ${props => props.$format ? "42px" : "34px"};
    display: flex;
    align-items: center;
    padding: ${props => props.$format ? "2px 0 0 4px" : "0 0 0 3px"};
    `
const ToolButton = styled.button`
    flex: none;
    width: 33px;
    height: 33px;
    display: flex;
    align-items: center;
    padding-left: 4px;
    background: ${props => props.$pressed ? "#18344c" : "none"};
    box-shadow: ${props => props.$pressed ? "inset 0 0 0 1px #1c4a6c" : "none"};
    `
const Caret = styled.button`
    flex: none;
    width: 11px;
    height: 33px;
    display: flex;
    align-items: center;
    padding: 4px 0 0 1px;
    `
const Separator = styled.span`
    flex: none;
    width: ${props => props.$wide ? "11px" : "7px"};
    height: 16px;
    display: flex;
    justify-content: center;

    &::before {
        content: "";
        width: 1px;
        background: #3d3d3d;
    }
    `
const Gap = styled.span`
    width: 7px;
    `
const ComboBox = styled.div`
    flex: none;
    width: ${props => props.$width}px;
    height: 24px;
    display: flex;
    margin-right: 1px;
    border: 1px solid #9a9a9a;
    `
const ComboSelect = styled.select`
    flex: 1;
    min-width: 0;
    padding: 0 0 0 2px;
    border: 0;
    background: #1f1f1f;
    appearance: none;
    outline: none;
    text-overflow: clip;
    `
const ComboArrow = styled.span`
    width: 17px;
    display: flex;
    align-items: center;
    justify-content: center;
    background: #333;
    border: 1px solid #9a9a9a;
    border-width: 0 1px 0 1px;
    `
const Body = styled.main`
    flex: 1;
    display: flex;
    border-bottom: 1px solid #fff;
    `
const Editor = styled.section`
    flex: 1;
    min-width: 0;
    display: flex;
    flex-direction: column;
    `
const EditorRow = styled.div`
    flex: 1;
    display: flex;
    `
const Column = styled.div`
    flex: 1;
    min-width: 0;
    display: flex;
    flex-direction: column;
    `
const RulerRow = styled.div`
    height: 25px;
    display: flex;
    overflow: hidden;
    `
const RulerCorner = styled.div`
    flex: none;
    width: 66px;
    padding: 8px 0 0 8px;
    `
const RulerScale = styled.svg`
    flex: 1;
    min-width: 0;
    height: 24px;

    text {
        fill: #dcdcdc;
        stroke: none;
        font-size: 9px;
        text-anchor: middle;
    }
    `
const Canvas = styled.div`
    flex: 1;
    display: flex;
    padding-left: 66px;
    `
const Page = styled.article`
    flex: 1;
    padding: 238px 266px 0;
    background: #fff;
    color: #000;
    font: 56px/64px "Liberation Serif", "Times New Roman", serif;
    `
const Paragraph = styled.p`
    margin: 0 0 ${props => props.$after || 65}px;
    white-space: pre-wrap;
    `
const Misspelled = styled.span`
    position: relative;
    white-space: normal;
    `
const Squiggle = styled.svg`
    position: absolute;
    left: 0;
    bottom: 4px;
    width: 100%;
    height: 9px;
    `
const VerticalScroll = styled.div`
    width: 17px;
    display: flex;
    flex-direction: column;
    padding-right: 1px;
    background: #171717;
    `
const HorizontalScroll = styled.div`
    height: 17px;
    display: flex;
    padding-top: 1px;
    background: #171717;
    `
const Track = styled.div`
    flex: ${props => props.$grow} 1 0;
    `
const Thumb = styled.div`
    flex: ${props => props.$grow} 1 0;
    background: #4d4d4d;
    `
const ScrollCorner = styled.div`
    width: 17px;
    background: #1f1f1f;
    `
const Sidebar = styled.aside`
    position: relative;
    width: 48px;
    display: flex;
    flex-direction: column;
    padding-left: 7px;
    border-left: 1px solid #fff;
    `
const Handle = styled.button`
    position: absolute;
    left: 0;
    top: 47%;
    width: 6px;
    height: 74px;
    display: flex;
    align-items: center;
    background: #fff;
    `
const PanelButton = styled.button`
    height: ${props => props.$short ? "27px" : "35px"};
    display: flex;
    align-items: center;
    justify-content: center;
    `
const StatusBar = styled.footer`
    height: 21px;
    display: grid;
    grid-template-columns: 32px 375fr 514fr 45px 449fr 414fr 69px 30px 31px 331fr 77px 144px 49px;
    `
const StatusCell = styled.div`
    display: flex;
    align-items: center;
    justify-content: ${props => props.$center ? "center" : "flex-start"};
    padding: ${props => props.$center ? "0" : "0 0 0 8px"};
    min-width: 0;
    white-space: nowrap;
    border-left: 1px solid #3a3a3a;

    &:first-child { border-left: 0; padding-left: 3px; }
    `
const ZoomButton = styled.button`
    flex: none;
    `
const ZoomSlider = styled.input`
    appearance: none;
    width: 98px;
    height: 12px;
    margin: 0 5px;
    background:
        linear-gradient(#fff, #fff) 50% 50% / 1px 6px no-repeat,
        linear-gradient(#fff, #fff) 50% 50% / 100% 2px no-repeat;

    &::-webkit-slider-thumb {
        appearance: none;
        width: 4px;
        height: 10px;
        border: 1px solid #fff;
        background: #8a8a8a;
    }
    `
const Taskbar = styled.footer`
    height: 40px;
    display: flex;
    background: linear-gradient(90deg, #1c3040 0%, #182f42 50%, #10283b 75%, #1b3040 86%, #132c3e 100%);
    `
const TaskButton = styled.button`
    flex: none;
    width: 48px;
    display: flex;
    align-items: center;
    justify-content: center;
    `
const SearchBox = styled.label`
    flex: none;
    width: 288px;
    display: flex;
    align-items: center;
    gap: 8px;
    padding-left: 11px;
    background: #35526a;
    border: 1px solid #4d6a80;
    border-width: 1px 1px 0;
    `
const SearchInput = styled.input`
    flex: 1;
    min-width: 0;
    padding: 0;
    border: 0;
    outline: none;
    background: none;
    font-size: 14px;
    line-height: 20px;
    margin-right: -8px;

    &::placeholder { color: #ccd6de; opacity: 1; }
    `
const Apps = styled.div`
    flex: 1;
    display: flex;
    padding-left: 2px;
    `
const AppButton = styled.button`
    width: 49px;
    display: flex;
    align-items: center;
    justify-content: center;
    background:
        linear-gradient(#8fc3ee, #8fc3ee) 50% 100% / ${props => props.$active ? "100%" : props.$open ? "40px" : "0"} 2px no-repeat,
        ${props => props.$active ? "#0d5189" : "none"};
    `
const Weather = styled.div`
    display: flex;
    align-items: center;
    gap: 9px;
    font-size: 13px;
    white-space: nowrap;
    margin-right: 19px;
    `
const Tray = styled.div`
    display: flex;
    `
const TrayButton = styled.button`
    width: 24px;
    display: flex;
    align-items: center;
    justify-content: center;
    `
const Language = styled.button`
    width: 36px;
    font-size: 12px;
    `
const Clock = styled.div`
    width: 72px;
    display: flex;
    flex-direction: column;
    align-items: center;
    justify-content: center;
    line-height: 18px;
    `
const Notifications = styled.button`
    position: relative;
    width: 46px;
    display: flex;
    align-items: center;
    padding-left: 7px;
    `
const Badge = styled.span`
    position: absolute;
    left: 18px;
    top: 20px;
    width: 16px;
    height: 16px;
    border-radius: 50%;
    border: 1px solid #5b93bd;
    background: #0a548d;
    line-height: 14px;
    text-align: center;
    `
const ShowDesktop = styled.button`
    width: 5px;
    border-left: 1px solid #6b7d8b;
    `
